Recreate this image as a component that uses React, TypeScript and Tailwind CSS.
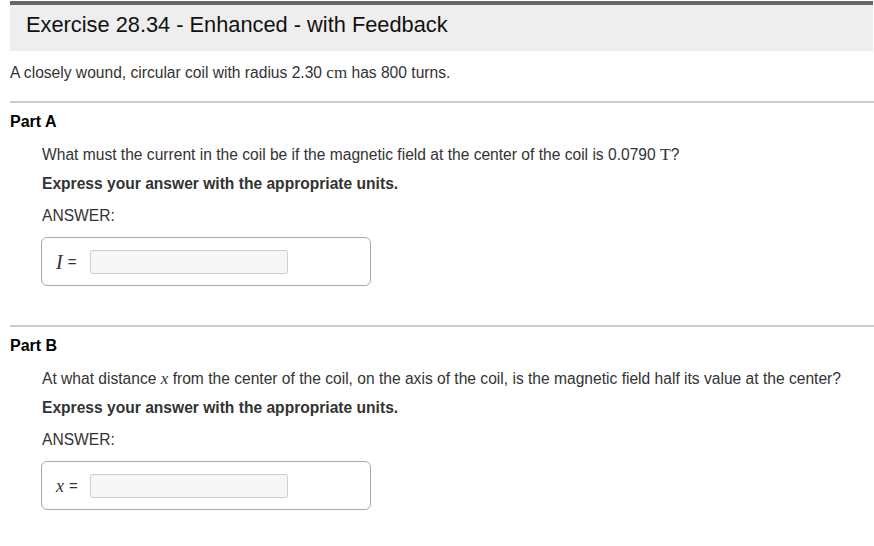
import React from "react";

function Part({ label, question, varName }: { label: string; question: React.ReactNode; varName: React.ReactNode }) {
  return (
    <div>
      <div className="h-[2px] bg-[#cccccc] ml-[10px]" />
      <div className="pl-[10px] pt-[9px] text-[16px] font-bold text-black leading-[20px]">{label}</div>
      <div className="pl-[42px]">
        <div className="mt-[13px] text-[15.6px] text-[#333] leading-[20px]">{question}</div>
        <div className="mt-[9px] text-[15.6px] font-bold text-[#333] leading-[20px]">Express your answer with the appropriate units.</div>
        <div className="mt-[12px] text-[15.6px] text-[#333] leading-[20px]">ANSWER:</div>
        <div className="mt-[11px] w-[330px] h-[49px] border border-[#aaaaaa] rounded-[6px] flex items-center pl-[14px] ml-[-1px]">
          <span className="w-[34px] text-[#333] flex items-center gap-[5px] leading-none">
            {varName}
            <span className="text-[15px] font-['Liberation_Sans',sans-serif]">=</span>
          </span>
          <div className="w-[198px] h-[24px] bg-[#f6f6f6] border border-[#cfcfcf] rounded-[2px]" />
        </div>
      </div>
    </div>
  );
}

export default function App() {
  return (
    <div className="w-[874px] h-[546px] bg-white font-['Liberation_Sans',Arial,sans-serif] overflow-hidden">
      <div className="ml-[10px] mr-[1px] mt-[1px] border-t-[4px] border-[#666666] bg-[#eeeeee] h-[50px] pl-[16px] flex items-center">
        <span className="text-[21.8px] text-[#111] leading-none mt-[-6px]">Exercise 28.34 - Enhanced - with Feedback</span>
      </div>
      <div className="pl-[10px] pt-[12px] h-[50px] text-[15.6px] text-[#333] leading-[20px]">
        A closely wound, circular coil with radius 2.30 <span className="font-['Liberation_Serif',serif] text-[17px] leading-none">cm</span> has 800 turns.
      </div>
      <Part
        label="Part A"
        question={<>What must the current in the coil be if the magnetic field at the center of the coil is 0.0790 <span className="font-['Liberation_Serif',serif] text-[17.5px] leading-none">T</span>?</>}
        varName={<span className="font-['Liberation_Serif',serif] italic text-[20px]">I</span>}
      />
      <div className="h-[39px]" />
      <Part
        label="Part B"
        question={<>At what distance <span className="font-['Liberation_Serif',serif] italic text-[17px] leading-none">x</span> from the center of the coil, on the axis of the coil, is the magnetic field half its value at the center?</>}
        varName={<span className="font-['Liberation_Serif',serif] italic text-[18px]">x</span>}
      />
    </div>
  );
}
